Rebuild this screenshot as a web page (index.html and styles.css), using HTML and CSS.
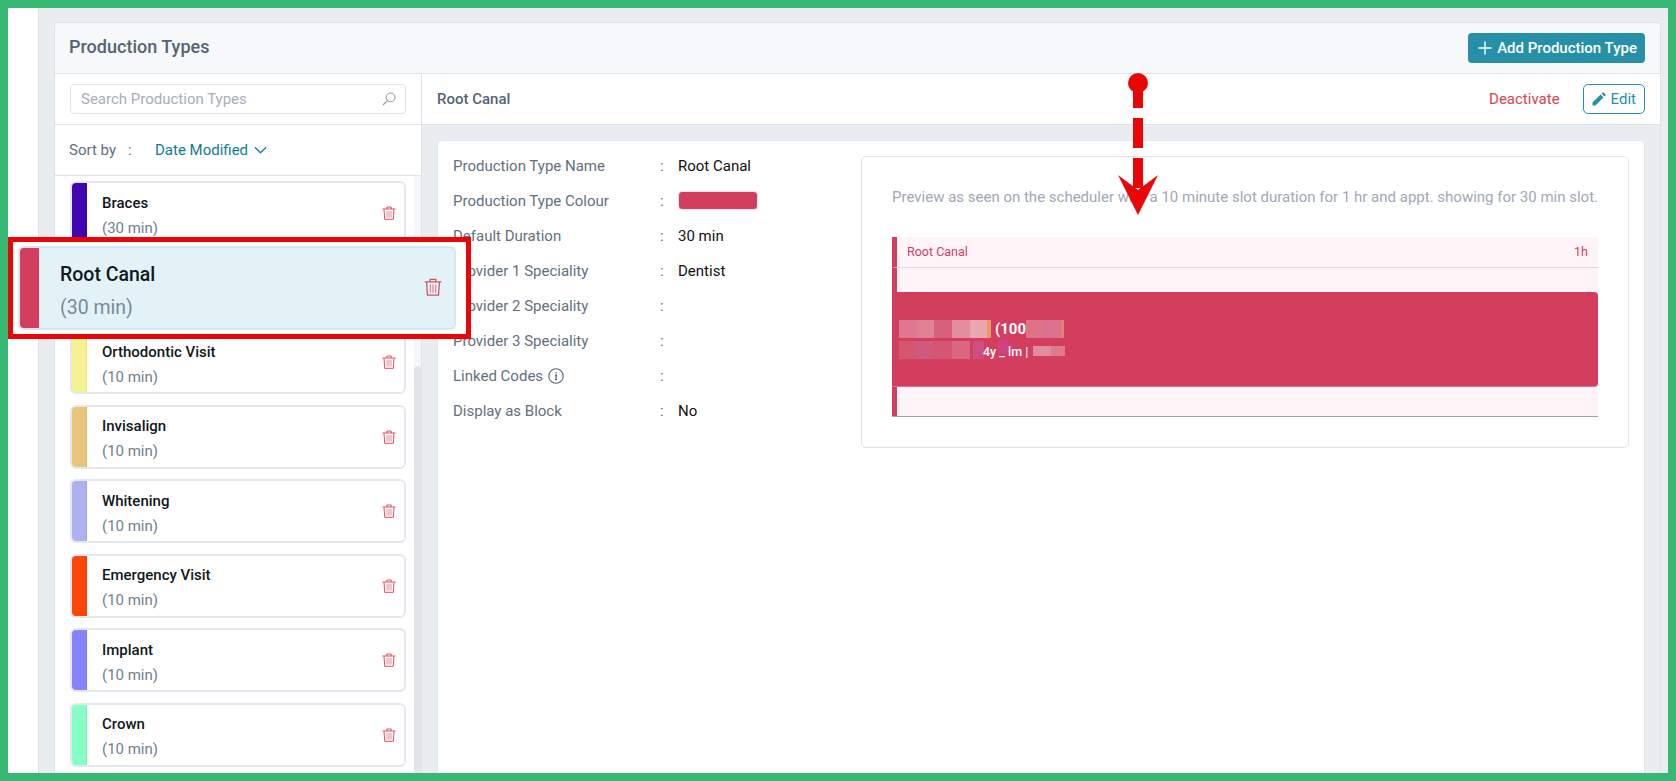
FILE: index.html
```html
<!DOCTYPE html>
<html lang="en">
<head>
<meta charset="utf-8">
<title>Production Types</title>
<link rel="stylesheet" href="styles.css">
</head>
<body>
<svg class="sprite" aria-hidden="true">
  <symbol id="trash" viewBox="0 0 14 14">
    <path d="M0.5 3H13.5M4.8 3V1H9.2V3M2 3.2L2.7 13.3H11.3L12 3.2" fill="none" stroke="currentColor" stroke-width="1"/>
    <path d="M5 5V11.5M7 5V11.5M9 5V11.5" fill="none" stroke="#e58a98" stroke-width="1"/>
  </symbol>
</svg>
<div class="frame">
  <div class="sidebar"></div>
  <main class="main">
    <section class="panel">
      <header class="panel-head">
        <h1 class="panel-title">Production Types</h1>
        <button class="btn-add">
          <svg class="plus" viewBox="0 0 14 14"><path d="M7 0.5V13.5M0.5 7H13.5" stroke="currentColor" stroke-width="1.4" fill="none"/></svg>
          Add Production Type
        </button>
      </header>
      <div class="panel-body">
        <aside class="left">
          <div class="search-row">
            <div class="search">
              <span class="placeholder">Search Production Types</span>
              <svg class="search-icon" viewBox="0 0 14 14"><circle cx="8.6" cy="5.4" r="4.4" fill="none" stroke="currentColor" stroke-width="1"/><path d="M5.4 8.6L1 13" stroke="currentColor" stroke-width="1.2" fill="none"/></svg>
            </div>
          </div>
          <div class="sort-row">
            <span class="sort-label">Sort by</span>
            <span class="sort-colon">:</span>
            <span class="sort-value">Date Modified</span>
            <svg class="chev" viewBox="0 0 14 8"><path d="M1 1L7 7L13 1" fill="none" stroke="currentColor" stroke-width="1.3"/></svg>
          </div>
          <div class="list-wrap">
            <div class="list">
              <div class="item"><span class="strip c-braces"></span><div class="item-text"><div class="item-name">Braces</div><div class="item-dur">(30 min)</div></div><svg class="trash"><use href="#trash"/></svg></div>
              <div class="item"><span class="strip c-root"></span></div>
              <div class="item"><span class="strip c-ortho"></span><div class="item-text"><div class="item-name">Orthodontic Visit</div><div class="item-dur">(10 min)</div></div><svg class="trash"><use href="#trash"/></svg></div>
              <div class="item"><span class="strip c-invis"></span><div class="item-text"><div class="item-name">Invisalign</div><div class="item-dur">(10 min)</div></div><svg class="trash"><use href="#trash"/></svg></div>
              <div class="item"><span class="strip c-white"></span><div class="item-text"><div class="item-name">Whitening</div><div class="item-dur">(10 min)</div></div><svg class="trash"><use href="#trash"/></svg></div>
              <div class="item"><span class="strip c-emerg"></span><div class="item-text"><div class="item-name">Emergency Visit</div><div class="item-dur">(10 min)</div></div><svg class="trash"><use href="#trash"/></svg></div>
              <div class="item"><span class="strip c-impl"></span><div class="item-text"><div class="item-name">Implant</div><div class="item-dur">(10 min)</div></div><svg class="trash"><use href="#trash"/></svg></div>
              <div class="item"><span class="strip c-crown"></span><div class="item-text"><div class="item-name">Crown</div><div class="item-dur">(10 min)</div></div><svg class="trash"><use href="#trash"/></svg></div>
            </div>
            <div class="scroll-track"><div class="scroll-thumb"></div></div>
          </div>
        </aside>
        <div class="right">
          <div class="right-head">
            <h2 class="right-title">Root Canal</h2>
            <span class="deactivate">Deactivate</span>
            <button class="btn-edit">
              <svg class="pencil" viewBox="0 0 14 14"><path d="M0.5 13.5V10.6L8.6 2.5L11.5 5.4L3.4 13.5ZM9.5 1.6L10.7 0.4Q11.1 0 11.5 0.4L13.6 2.5Q14 2.9 13.6 3.3L12.4 4.5Z" fill="currentColor"/></svg>
              Edit
            </button>
          </div>
          <div class="right-body">
            <div class="card">
              <dl class="details">
                <div class="row"><dt>Production Type Name</dt><dd class="colon">:</dd><dd class="val">Root Canal</dd></div>
                <div class="row"><dt>Production Type Colour</dt><dd class="colon">:</dd><dd class="val"><span class="swatch"></span></dd></div>
                <div class="row"><dt>Default Duration</dt><dd class="colon">:</dd><dd class="val">30 min</dd></div>
                <div class="row"><dt>Provider 1 Speciality</dt><dd class="colon">:</dd><dd class="val">Dentist</dd></div>
                <div class="row"><dt>Provider 2 Speciality</dt><dd class="colon">:</dd><dd class="val"></dd></div>
                <div class="row"><dt>Provider 3 Speciality</dt><dd class="colon">:</dd><dd class="val"></dd></div>
                <div class="row"><dt>Linked Codes <svg class="info" viewBox="0 0 16 16"><circle cx="8" cy="8" r="7.2" fill="none" stroke="currentColor" stroke-width="1.1"/><path d="M7 7.2H8.4L7.8 11.6H9M8.3 4.2V5.4" fill="none" stroke="currentColor" stroke-width="1.3"/></svg></dt><dd class="colon">:</dd><dd class="val"></dd></div>
                <div class="row"><dt>Display as Block</dt><dd class="colon">:</dd><dd class="val">No</dd></div>
              </dl>
              <div class="preview">
                <p class="preview-note">Preview as seen on the scheduler with a 10 minute slot duration for 1 hr and appt. showing for 30 min slot.</p>
                <div class="chart">
                  <div class="chart-head"><span>Root Canal</span><span>1h</span></div>
                  <div class="chart-gap"></div>
                  <div class="event">
                    <div class="ev-line">
                      <i class="b b18 m1"></i><i class="b b17 m2"></i><i class="b b18 m3"></i><i class="b b18 m4"></i><i class="b b17 m5"></i><i class="b b4 m6"></i>
                      <span class="ev-title">(100</span>
                      <i class="b b18 m7"></i><i class="b b17 m8"></i><i class="b b3 m9"></i>
                    </div>
                    <div class="ev-line ev-sub">
                      <i class="b b17 n1"></i><i class="b b16 n2"></i><i class="b b20 n3"></i><i class="b b18 n4"></i><i class="b b11 n5"></i>
                      <span class="ev-meta">4y _ lm |</span>
                      <i class="b b18 n6"></i><i class="b b14 n7"></i>
                    </div>
                  </div>
                  <div class="chart-tail"></div>
                </div>
              </div>
            </div>
          </div>
        </div>
      </div>
    </section>
  </main>
  <div class="drag-box">
    <div class="drag-card">
      <span class="drag-strip"></span>
      <div class="drag-text"><div class="drag-name">Root Canal</div><div class="drag-dur">(30 min)</div></div>
      <svg class="drag-trash"><use href="#trash"/></svg>
    </div>
  </div>
  <svg class="arrow" viewBox="0 0 44 146" aria-hidden="true">
    <circle cx="22" cy="13" r="10" fill="#ea0606"/>
    <path d="M17 13H27V38H17ZM17 48H27V78H17ZM17 88H27V118H17Z" fill="#ea0606"/>
    <path d="M2 105L22 120L42 105L22 145Z" fill="#ea0606"/>
  </svg>
</div>
</body>
</html>
```
FILE: styles.css
```css
* { box-sizing: border-box; }
html, body { margin: 0; padding: 0; height: 100%; overflow: hidden; }
body { font-family: Roboto, "Liberation Sans", sans-serif; font-size: 15px; color: #111; background: #fff; }
h1, h2, p, dl, dd { margin: 0; }
.sprite { display: none; }

.frame { position: relative; display: flex; width: 1676px; height: 781px; border: 8px solid #38b673; overflow: hidden; background: #fff; }
.sidebar { flex: 0 0 30px; background: #fff; }
.main { flex: 1; min-width: 0; background: #e9edf0; border-left: 1px solid #dde2e8; padding: 14px 7px 0 15px; overflow: hidden; }

.panel { border: 1px solid #dde3ea; border-radius: 4px 4px 0 0; background: #fff; width: 1607px; }
.panel-head { display: flex; align-items: center; justify-content: space-between; height: 51px; padding: 0 15px 1px 14px; background: #f6f8fa; border-bottom: 1px solid #dde3ea; border-radius: 4px 4px 0 0; }
.panel-title { margin-bottom: 2px; font-size: 18px; font-weight: 500; color: #536575; }
.btn-add { display: flex; align-items: center; gap: 5px; height: 30px; padding: 0 8px 0 10px; border: 0; border-radius: 4px; background: #2590a8; color: #fff; font: 500 15px Roboto, sans-serif; }
.plus { width: 14px; height: 14px; }

.panel-body { display: flex; }
.left { flex: 0 0 367px; border-right: 1px solid #dde3ea; }
.search-row { height: 51px; padding: 10px 15px; border-bottom: 1px solid #dde3ea; }
.search { display: flex; align-items: center; justify-content: space-between; height: 30px; padding: 0 9px 0 10px; border: 1px solid #dde3ea; border-radius: 4px; }
.placeholder { color: #a5aeba; }
.search-icon { width: 14px; height: 14px; color: #8d98a6; }
.sort-row { display: flex; align-items: center; height: 51px; padding: 0 15px 0 14px; border-bottom: 1px solid #dde3ea; color: #5f7080; }
.sort-label { width: 59px; }
.sort-colon { width: 27px; }
.sort-value { color: #0f7b94; }
.chev { width: 13px; height: 8px; margin-left: 6px; color: #0f7b94; }

.list-wrap { display: flex; }
.list { flex: 1; min-width: 0; padding: 5px 8px 0 15px; }
.item { display: flex; align-items: center; height: 64px; margin-bottom: 10.57px; border: 2px solid #e4e8ee; border-radius: 6px; background: #fff; }
.strip { align-self: stretch; flex: 0 0 15px; border-right: 1px solid rgba(0,0,0,.06); border-radius: 4px 0 0 4px; }
.c-braces { background: #3f06b0; }
.c-root { background: #d33e5e; }
.c-ortho { background: #f5f090; }
.c-invis { background: #e8c47c; }
.c-white { background: #adb2ee; }
.c-emerg { background: #ff4508; }
.c-impl { background: #8683ff; }
.c-crown { background: #85ffc4; }
.item-text { flex: 1; padding: 4px 0 0 15px; }
.item-name { font-weight: 500; line-height: 20px; color: #101820; }
.item-dur { margin-top: 5px; line-height: 20px; color: #6f7f90; }
.trash { width: 14px; height: 14px; margin-right: 8px; color: #d9505a; }
.scroll-track { flex: 0 0 7px; padding-top: 190px; background: #f5f6f8; }
.scroll-thumb { height: 600px; background: #e2e5e8; border-radius: 4px 4px 0 0; }

.right { flex: 1; min-width: 0; }
.right-head { display: flex; align-items: center; height: 51px; padding: 0 15px; border-bottom: 1px solid #dde3ea; background: #fff; }
.right-title { flex: 1; font-size: 15px; font-weight: 500; color: #536575; }
.deactivate { color: #d9444e; margin-right: 23px; }
.btn-edit { display: flex; align-items: center; gap: 5px; height: 30px; padding: 0 8px; border: 1px solid #2590a8; border-radius: 5px; background: #fff; color: #2590a8; font: 400 15px Roboto, sans-serif; }
.pencil { width: 14px; height: 14px; }
.right-body { height: 700px; padding: 15px; background: #e9edf0; }
.card { display: flex; align-items: flex-start; height: 700px; padding: 7px 15px 0 15px; border: 1px solid #e4e8ed; border-radius: 4px; background: #fff; }
.details { flex: 0 0 408px; }
.row { display: flex; align-items: center; height: 35px; }
.row dt { flex: 0 0 207px; display: flex; align-items: center; gap: 5px; color: #5f7080; }
.colon { flex: 0 0 18px; color: #5f7080; }
.val { color: #111; }
.swatch { display: block; width: 80px; height: 19px; border-radius: 4px; background: #d33e5e; border: 1px solid #e4e8ed; }
.info { width: 16px; height: 16px; color: #536575; }

.preview { flex: 1; margin-top: 8px; padding: 30px; border: 1px solid #dde3ea; border-radius: 5px; }
.preview-note { line-height: 20px; color: #a0a8b5; white-space: nowrap; }
.chart { margin-top: 30px; background: #fff5f8; border-bottom: 1px solid #9aa3ae; }
.chart-head { display: flex; align-items: center; justify-content: space-between; height: 31px; padding: 0 10px 1px; font-size: 12.5px; color: #d33e5e; border-left: 5px solid #d33e5e; border-bottom: 1px solid #ddd9e4; }
.chart-gap { height: 24px; border-left: 5px solid #d33e5e; }
.event { display: flex; flex-direction: column; justify-content: center; height: 95px; padding: 0 7px; background: #d33e5e; border-radius: 0 4px 4px 0; border-bottom: 1px solid #e56f88; }
.ev-line { display: flex; align-items: center; height: 18px; }
.ev-sub { margin-top: 3px; font-size: 12.5px; }
.ev-title { margin: 0 0 0 4px; font-weight: 700; color: #fff; font-size: 15px; }
.ev-meta { position: relative; margin: 3px 5px 0 -1px; color: #fff; font-weight: 500; white-space: nowrap; }
.ev-meta::after { content: ""; position: absolute; left: 15px; top: -4px; width: 10px; height: 14px; background: #cf4085; }
.b { display: block; height: 18px; flex: none; }
.b3 { width: 3px; } .b4 { width: 4px; } .b11 { width: 11px; margin-left: 3px; } .b14 { width: 14px; } .b16 { width: 16px; } .b17 { width: 17px; } .b18 { width: 18px; } .b20 { width: 20px; }
.m1 { background: #de7892; } .m2 { background: #e08296; } .m3 { background: #d9607c; } .m4 { background: #e48d9f; } .m5 { background: #e8a5b2; } .m6 { background: #e49a60; }
.m7 { background: #e07285; } .m8 { background: #dc708f; } .m9 { background: #e5806e; }
.n1 { background: #d5566f; } .n2 { background: #cf5a7f; } .n3 { background: #d55674; } .n4 { background: #da6680; } .n5 { background: #cf5080; }
.n6 { height: 10px; margin-top: 3px; background: #e28c9f; } .n7 { height: 10px; margin-top: 3px; background: #df7a8c; }
.chart-tail { height: 29px; border-left: 5px solid #d33e5e; }

.drag-box { position: absolute; left: 0; top: 229px; width: 463px; height: 102px; padding: 4px 10px 5px; border: 5px solid #ea0606; background: #fff; }
.drag-card { display: flex; align-items: center; height: 84px; margin-left: -5px; border: 2px solid #d5e8ee; border-radius: 6px; background: #e2f2f7; }
.drag-strip { align-self: stretch; flex: 0 0 19px; background: #d33e5e; border-radius: 4px 0 0 4px; }
.drag-text { flex: 1; padding: 6px 0 0 21px; }
.drag-name { font-size: 19.5px; font-weight: 500; line-height: 26px; color: #101820; }
.drag-dur { margin-top: 7px; font-size: 19.5px; line-height: 26px; color: #7a8a9a; }
.drag-trash { width: 18px; height: 18px; margin: 0 12px 2px 0; color: #d9505a; }

.arrow { position: absolute; left: 1108px; top: 62px; width: 44px; height: 146px; }
```
